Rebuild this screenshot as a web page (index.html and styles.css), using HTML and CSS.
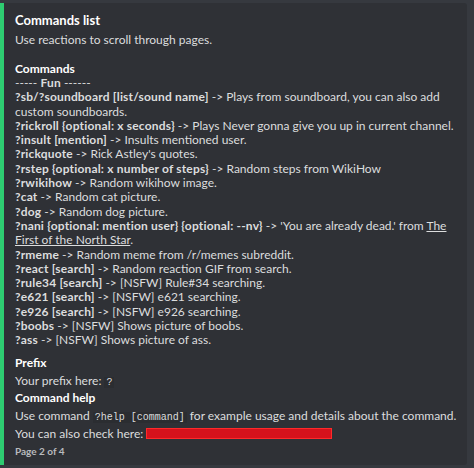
FILE: index.html
```html
<!DOCTYPE html>
<html lang="en">
<head>
    <meta charset="UTF-8">
    <title>Commands list</title>
    <link rel="stylesheet" href="styles.css">
</head>
<body>

    <div class="embed">
        <div class="embed-title">Commands list</div>
        <div class="embed-desc">Use reactions to scroll through pages.</div>

        <div class="field">
            <div class="field-name">Commands</div>
            <div class="field-value">
                ----- <b>Fun</b> ------<br>
                <b>?sb/?soundboard [list/sound name]</b> -&gt; Plays from soundboard, you can also add custom soundboards.<br>
                <b>?rickroll {optional: x seconds}</b> -&gt; Plays Never gonna give you up in current channel.<br>
                <b>?insult [mention]</b> -&gt; Insults mentioned user.<br>
                <b>?rickquote</b> -&gt; Rick Astley's quotes.<br>
                <b>?rstep {optional: x number of steps}</b> -&gt; Random steps from WikiHow<br>
                <b>?rwikihow</b> -&gt; Random wikihow image.<br>
                <b>?cat</b> -&gt; Random cat picture.<br>
                <b>?dog</b> -&gt; Random dog picture.<br>
                <b>?nani {optional: mention user} {optional: --nv}</b> -&gt; 'You are already dead.' from <u>The First of the North Star</u>.<br>
                <b>?rmeme</b> -&gt; Random meme from /r/memes subreddit.<br>
                <b>?react [search]</b> -&gt; Random reaction GIF from search.<br>
                <b>?rule34 [search]</b> -&gt; [NSFW] Rule#34 searching.<br>
                <b>?e621 [search]</b> -&gt; [NSFW] e621 searching.<br>
                <b>?e926 [search]</b> -&gt; [NSFW] e926 searching.<br>
                <b>?boobs</b> -&gt; [NSFW] Shows picture of boobs.<br>
                <b>?ass</b> -&gt; [NSFW] Shows picture of ass.
            </div>
        </div>

        <div class="field field-code">
            <div class="field-name">Prefix</div>
            <div class="field-value">Your prefix here: <code>?</code></div>
        </div>

        <div class="field field-code field-last">
            <div class="field-name">Command help</div>
            <div class="field-value">
                Use command <code>?help [command]</code> for example usage and details about the command.<br>
                You can also check here: <span class="redacted"></span>
            </div>
        </div>

        <div class="embed-footer">Page 2 of 4</div>
    </div>

</body>
</html>
```

FILE: styles.css
```css
body {
    margin: 0;
    padding-top: 3px;
    background-color: #36393f;
    font-family: Lato, "Open Sans", sans-serif;
}

.embed {
    width: 445px;
    border-left: 4px solid #2ecc71;
    background: #2f3136;
    padding: 9px 7px 8px 11px;
    border-radius: 0 3px 3px 0;
}

.embed-title {
    color: #ffffff;
    font-size: 13px;
    font-weight: bold;
    line-height: 16px;
}

.embed-desc {
    color: #dcddde;
    font-size: 12px;
    line-height: 15px;
    margin-top: 4px;
    margin-bottom: 14px;
}

.field {
    margin-top: 7px;
}

.field-name {
    color: #ffffff;
    font-size: 12px;
    font-weight: bold;
    line-height: 15px;
}

.field-value {
    color: #dcddde;
    font-size: 12px;
    line-height: 14.3px;
}

.field-value b {
    letter-spacing: 0.18px;
}

.field-code .field-value {
    margin-top: 3px;
    line-height: 15.5px;
}

.field-last {
    margin-top: 0;
}

code {
    font-family: "Liberation Mono", monospace;
    font-size: 10px;
    padding: 0 2px;
    background: #2b2d31;
}

.redacted {
    display: inline-block;
    width: 184px;
    height: 9px;
    vertical-align: -1px;
    background: #d5121c;
    border: 1px solid #ff2a2a;
}

.embed-footer {
    color: #b9bbbe;
    font-size: 10px;
    font-weight: bold;
    line-height: 12px;
    margin-top: 4px;
}
```
